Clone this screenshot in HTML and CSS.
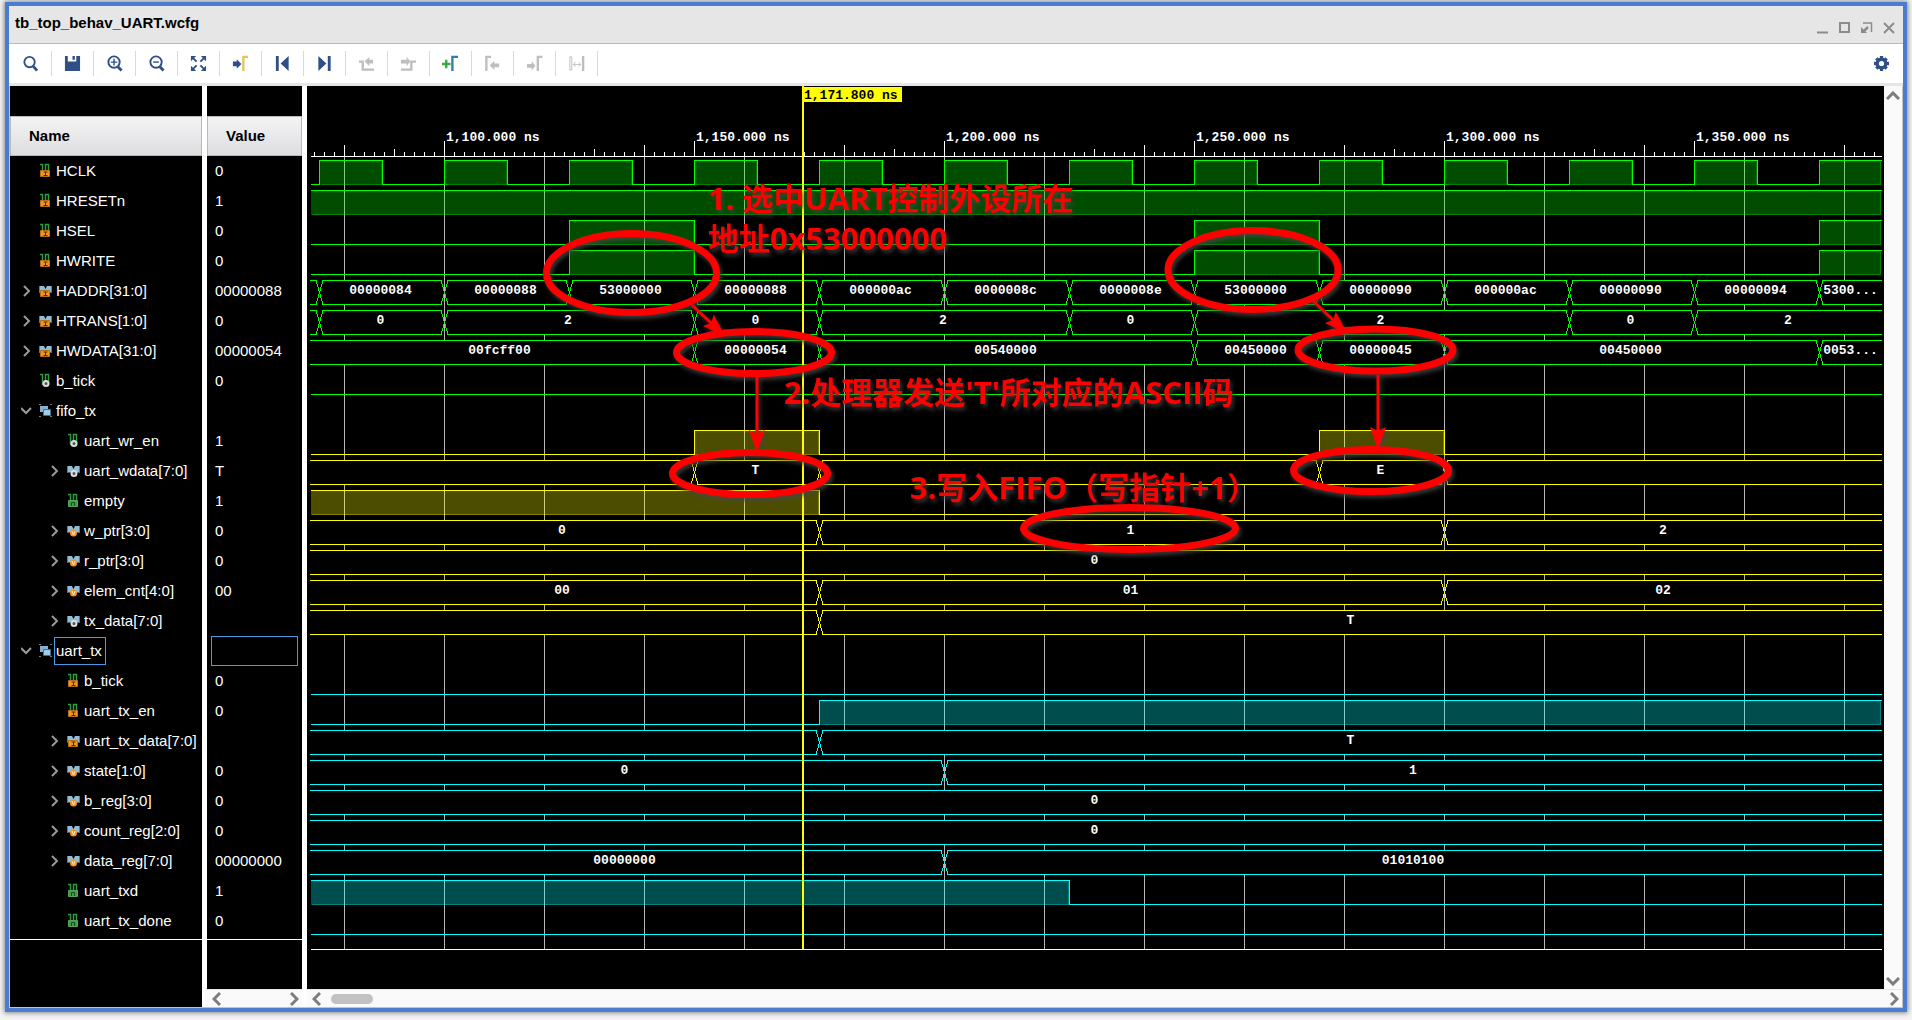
FILE: index.html
```html
<!DOCTYPE html>
<html lang="zh-CN">
<head>
    <meta charset="UTF-8">
    <meta name="viewport" content="width=device-width, initial-scale=1.0">
    <title>tb_top_behav_UART.wcfg</title>
    <link rel="stylesheet" href="styles.css">
</head>
<body>
    <div class="window">
        <header class="titlebar">
            <h1>tb_top_behav_UART.wcfg</h1>
            <div class="window-buttons">
                <button type="button" aria-label="Minimize"><svg width="12" height="12"><path d="M0 10.500h11" stroke-width="2"/></svg></button>
                <button type="button" aria-label="Maximize"><svg width="12" height="12"><path d="M1 1h9v9H1z" stroke-width="2"/></svg></button>
                <button type="button" aria-label="Float"><svg width="12" height="12"><path d="M2 1h8.500v9" stroke-width="1.500"/><path d="M2 10l5-5" stroke-width="2.500"/><path d="M0 5v6h6z" fill="#8c8c8c" stroke="none"/></svg></button>
                <button type="button" aria-label="Close"><svg width="12" height="12"><path d="M1 1l10 10M11 1L1 11" stroke-width="2"/></svg></button>
            </div>
        </header>

        <nav class="toolbar">
            <button type="button" aria-label="Search"><svg viewBox="0 0 18 18"><circle cx="8" cy="7.500" r="5.500"/><path d="M12 12l4 4.500" stroke-width="3"/></svg></button>
            <button type="button" aria-label="Save"><svg viewBox="0 0 18 18"><path class="solid" d="M1 1h3v6h9V1h4v16H1zM9 1h2.500v4H9z"/></svg></button>
            <button type="button" aria-label="Zoom In"><svg viewBox="0 0 18 18"><circle cx="8.500" cy="7.500" r="6"/><path d="M12.500 12.500l4 4" stroke-width="3"/><path d="M5 7.500h7M8.500 4v7" stroke-width="1.500"/></svg></button>
            <button type="button" aria-label="Zoom Out"><svg viewBox="0 0 18 18"><circle cx="8.500" cy="7.500" r="6"/><path d="M12.500 12.500l4 4" stroke-width="3"/><path d="M5.500 7.500h6" stroke-width="1.500"/></svg></button>
            <button type="button" aria-label="Zoom Fit"><svg viewBox="0 0 18 18"><path d="M3 3l4 4M15 3l-4 4M3 15l4-4M15 15l-4-4"/><path class="solid" d="M1 1h5.500L1 6.500zM17 1v5.500L11.500 1zM1 17v-5.500L6.500 17zM17 17h-5.500l5.500-5.500z"/></svg></button>
            <button type="button" aria-label="Go To Cursor"><svg viewBox="0 0 18 18"><path class="solid" d="M1 7h4V4.500L10 9.500l-5 5V12H1z"/><path d="M12 17V2h5" stroke="#e2c65a" stroke-width="2.500"/></svg></button>
            <button type="button" aria-label="Go To Start"><svg viewBox="0 0 18 18"><path class="solid" d="M2 1h3v16H2zM15.500 1v16L7 9z"/></svg></button>
            <button type="button" aria-label="Go To End"><svg viewBox="0 0 18 18"><path class="solid" d="M12.500 1h3v16h-3zM2.500 1v16L11 9z"/></svg></button>
            <button type="button" aria-label="Previous Transition" disabled><svg viewBox="0 0 18 18"><path d="M1 7h4v8.500h12" stroke-width="2.500"/><path class="solid" d="M7 6.500L12 2v3h4v4h-4v3z"/></svg></button>
            <button type="button" aria-label="Next Transition" disabled><svg viewBox="0 0 18 18"><path d="M1 15.500h11V7h5" stroke-width="2.500"/><path class="solid" d="M11 6.500L7 2v3H1v4h6v3z"/></svg></button>
            <button type="button" aria-label="Add Marker"><svg viewBox="0 0 18 18"><path d="M0 9.500h9M4.500 5v9" stroke="#3aa845" stroke-width="2.500"/><path d="M11 17V2h6" stroke="#2f7fb0" stroke-width="2.500"/></svg></button>
            <button type="button" aria-label="Previous Marker" disabled><svg viewBox="0 0 18 18"><path d="M2.500 17V2h5" stroke-width="2.500"/><path class="solid" d="M6 11l5-5v3h5v4h-5v3z"/></svg></button>
            <button type="button" aria-label="Next Marker" disabled><svg viewBox="0 0 18 18"><path d="M12.500 17V2h5" stroke-width="2.500"/><path class="solid" d="M10 11.500l-4-5v3H1v4h5v3z"/></svg></button>
            <button type="button" aria-label="Swap Cursors" disabled><svg viewBox="0 0 18 18"><path d="M2 2h2v14H2z" stroke-width="1"/><path d="M16 1v16" stroke-width="2.500"/><path d="M5.500 10h8M8 7.500L5.500 10 8 12.500M11 7.500l2.500 2.500-2.500 2.500" stroke-width="1"/></svg></button>
            <button type="button" class="settings" aria-label="Settings"><svg viewBox="0 0 18 18"><circle cx="9" cy="9" r="4.500" stroke-width="3.500"/><path d="M9 17v-3M17 9h-3M14.500 14.500l-2-2M3.500 14.500l2-2M9 1v3M1 9h3M3.500 3.500l2 2M14.500 3.500l-2 2" stroke-width="3.500"/></svg></button>
        </nav>

        <main class="viewer">
            <section class="pane names">
                <h2>Name</h2>
                <ul id="names"></ul>
            </section>
            <section class="pane values">
                <h2>Value</h2>
                <ul id="values"></ul>
                <div class="scrollbar">
                    <button type="button" aria-label="Scroll values left"><svg width="9" height="14"><path d="M8 1L2 7l6 6"/></svg></button>
                    <button type="button" aria-label="Scroll values right"><svg width="9" height="14"><path d="M1 1l6 6-6 6"/></svg></button>
                </div>
            </section>
            <section class="waves">
                <div class="canvas"><svg id="wave" role="img" aria-label="Waveform"></svg></div>
                <div class="scrollbar vertical">
                    <button type="button" aria-label="Scroll up"><svg width="14" height="9"><path d="M1 8l6-6 6 6"/></svg></button>
                    <button type="button" aria-label="Scroll down"><svg width="14" height="9"><path d="M1 1l6 6 6-6"/></svg></button>
                </div>
                <div class="scrollbar bottom">
                    <button type="button" aria-label="Scroll left"><svg width="9" height="14"><path d="M8 1L2 7l6 6"/></svg></button>
                    <span class="thumb"></span>
                    <button type="button" aria-label="Scroll right"><svg width="9" height="14"><path d="M1 1l6 6-6 6"/></svg></button>
                </div>
            </section>
        </main>
    </div>
    <script src="script.js"></script>
</body>
</html>
```

FILE: styles.css
```css
* {
    margin: 0;
    padding: 0;
    box-sizing: border-box;
}

body {
    height: 100vh;
    padding: 2px 5px 8px;
    background: #f4f4f4;
    font-family: "Liberation Sans", Arial, sans-serif;
    font-size: 15px;
    color: #000;
    overflow: hidden;
}

button {
    display: flex;
    align-items: center;
    justify-content: center;
    border: none;
    background: none;
    cursor: pointer;
}

svg {
    display: block;
    fill: none;
}

.window {
    display: flex;
    flex-direction: column;
    height: 100%;
    border: 4px solid #4a7dcf;
    background: #fff;
    box-shadow: 0 0 5px 1px #888;
}

/* title bar */
.titlebar {
    display: flex;
    align-items: center;
    justify-content: space-between;
    height: 38px;
    padding: 0 8px 0 6px;
    background: #e6e6e6;
    border-bottom: 1px solid #bababa;
}

.titlebar h1 {
    font-size: 15px;
    line-height: 34px;
    padding-bottom: 4px;
}

.window-buttons {
    display: flex;
    gap: 10px;
    padding-top: 6px;
}

.window-buttons svg {
    stroke: #8c8c8c;
}

/* toolbar */
.toolbar {
    display: flex;
    align-items: center;
    height: 42px;
    padding: 0 1px;
    background: #fff;
    border-bottom: 3px solid #e6e6e6;
}

.toolbar button {
    width: 42px;
    height: 25px;
    border-right: 1px solid #d9d9d9;
    color: #2f4f87;
}

.toolbar button:disabled {
    color: #bebebe;
}

.toolbar svg {
    width: 17px;
    height: 17px;
    stroke: currentColor;
    stroke-width: 2;
}

.toolbar .solid {
    fill: currentColor;
    stroke: none;
}

.toolbar .settings {
    margin-left: auto;
    border: none;
}

/* panes */
.viewer {
    display: flex;
    flex: 1;
    gap: 5px;
    min-height: 0;
    border: solid #c4c4c4;
    border-width: 0 1px 1px;
}

.pane {
    display: flex;
    flex-direction: column;
    flex: none;
    padding-top: 30px;
    background: #000;
    color: #fff;
}

.names {
    width: 192px;
}

.values {
    width: 95px;
}

.pane h2 {
    height: 40px;
    padding-left: 18px;
    border: 1px solid #b9b9bb;
    background: linear-gradient(#f4f4f5, #dddde0);
    color: #000;
    font-size: 15px;
    line-height: 38px;
}

.pane ul {
    list-style: none;
    padding-bottom: 3px;
    border-bottom: 1px solid #fff;
}

.pane li {
    display: flex;
    align-items: center;
    height: 30px;
    line-height: 26px;
    padding-bottom: 1px;
    white-space: nowrap;
}

.names li {
    padding-left: 11px;
}

.names li.child {
    padding-left: 39px;
}

.names .arrow {
    width: 18px;
    stroke: #9a9a9a;
    stroke-width: 2;
}

.names .icon {
    width: 15px;
}

.names .label {
    padding: 0 3px 0 1px;
    border: 1px solid transparent;
}

.values li {
    margin: 0 4px;
    padding-left: 3px;
    border: 1px solid transparent;
}

.names .selected .label,
.values .selected {
    border-color: #4a9be0;
}

.scrollbar {
    display: flex;
    align-items: center;
    justify-content: space-between;
    height: 18px;
    padding: 0 3px 0 5px;
    background: #fafafa;
    border-top: 1px solid #e6e6e6;
}

.scrollbar svg {
    stroke: #7d7d7d;
    stroke-width: 3;
}

.values .scrollbar {
    margin-top: auto;
}

.vertical {
    flex-direction: column;
    width: 18px;
    height: auto;
    padding: 5px 0 3px;
    border: none;
}

.bottom {
    grid-column: 1 / 3;
    gap: 10px;
}

.thumb {
    width: 42px;
    height: 10px;
    margin-right: auto;
    border-radius: 5px;
    background: #c1c1c1;
}

/* waveform */
.waves {
    display: grid;
    flex: 1;
    grid-template-columns: 1fr 18px;
    grid-template-rows: 1fr 18px;
    min-width: 0;
}

.canvas {
    min-width: 0;
    background: #000;
    overflow: hidden;
}

#wave {
    width: 100%;
    height: 100%;
    shape-rendering: crispEdges;
}

#wave text {
    fill: #fff;
    font: bold 13px "Liberation Mono", "Courier New", monospace;
}

.green {
    stroke: #0f0;
}

.yellow {
    stroke: #ff0;
}

.cyan {
    stroke: #0ff;
}

.fill-green {
    fill: #0f0;
    stroke: #0f0;
}

.fill-yellow {
    fill: #ff0;
    stroke: #ff0;
}

.fill-cyan {
    fill: #0ff;
    stroke: #0ff;
}

.high {
    fill-opacity: 0.3;
    stroke-opacity: 0.3;
}

.bus {
    fill: #000;
}

.grid {
    stroke: #b8b8b8;
}

.ruler {
    stroke: #fff;
}

.cursor {
    stroke: #ff0;
    stroke-width: 2;
}

.cursor-box {
    fill: #ff0;
}

#wave .cursor-label {
    fill: #000;
}

.notes {
    shape-rendering: auto;
    filter: drop-shadow(2px 3px 2px rgba(70, 70, 70, 0.8));
}

.notes ellipse {
    stroke: #f00;
    stroke-width: 7;
}

.notes line {
    stroke: #f00;
    stroke-width: 3;
}

.notes path {
    fill: #f00;
}

#wave .notes text {
    fill: #f00;
    font: bold 31px "Open Sans", "Noto Sans CJK SC", sans-serif;
}
```

FILE: script.js
```js
// edges and high ranges in ns, null = runs off the visible window
const signals = [
    { name: 'HCLK', value: '0', icon: 'bit-in', color: 'green', high: [[1075, 1087.5], [1100, 1112.5], [1125, 1137.5], [1150, 1162.5], [1175, 1187.5], [1200, 1212.5], [1225, 1237.5], [1250, 1262.5], [1275, 1287.5], [1300, 1312.5], [1325, 1337.5], [1350, 1362.5], [1375, null]] },
    { name: 'HRESETn', value: '1', icon: 'bit-in', color: 'green', high: [[null, null]] },
    { name: 'HSEL', value: '0', icon: 'bit-in', color: 'green', high: [[1125, 1150], [1250, 1275], [1375, null]] },
    { name: 'HWRITE', value: '0', icon: 'bit-in', color: 'green', high: [[1125, 1150], [1250, 1275], [1375, null]] },
    { name: 'HADDR[31:0]', value: '00000088', icon: 'bus-in', color: 'green', edges: [1075, 1100, 1125, 1150, 1175, 1200, 1225, 1250, 1275, 1300, 1325, 1350, 1375], data: ['', '00000084', '00000088', '53000000', '00000088', '000000ac', '0000008c', '0000008e', '53000000', '00000090', '000000ac', '00000090', '00000094', '5300...'] },
    { name: 'HTRANS[1:0]', value: '0', icon: 'bus-in', color: 'green', edges: [1075, 1100, 1150, 1175, 1225, 1250, 1325, 1350], data: ['', '0', '2', '0', '2', '0', '2', '0', '2'] },
    { name: 'HWDATA[31:0]', value: '00000054', icon: 'bus-in', color: 'green', edges: [1150, 1175, 1250, 1275, 1300, 1375], data: ['00fcff00', '00000054', '00540000', '00450000', '00000045', '00450000', '0053...'] },
    { name: 'b_tick', value: '0', icon: 'bit-sig', color: 'green', high: [] },
    { name: 'fifo_tx', value: '', icon: 'group' },
    { name: 'uart_wr_en', value: '1', icon: 'bit-sig', color: 'yellow', child: true, high: [[1150, 1175], [1275, 1300]] },
    { name: 'uart_wdata[7:0]', value: 'T', icon: 'bus-sig', color: 'yellow', child: true, edges: [1150, 1175, 1275, 1300], data: ['', 'T', '', 'E', ''] },
    { name: 'empty', value: '1', icon: 'bit-out', color: 'yellow', child: true, high: [[null, 1175]] },
    { name: 'w_ptr[3:0]', value: '0', icon: 'bus-var', color: 'yellow', child: true, edges: [1175, 1300], data: ['0', '1', '2'] },
    { name: 'r_ptr[3:0]', value: '0', icon: 'bus-var', color: 'yellow', child: true, edges: [], data: ['0'] },
    { name: 'elem_cnt[4:0]', value: '00', icon: 'bus-var', color: 'yellow', child: true, edges: [1175, 1300], data: ['00', '01', '02'] },
    { name: 'tx_data[7:0]', value: '', icon: 'bus-sig', color: 'yellow', child: true, edges: [1175], data: ['', 'T'] },
    { name: 'uart_tx', value: '', icon: 'group', selected: true },
    { name: 'b_tick', value: '0', icon: 'bit-in', color: 'cyan', child: true, high: [] },
    { name: 'uart_tx_en', value: '0', icon: 'bit-in', color: 'cyan', child: true, high: [[1175, null]] },
    { name: 'uart_tx_data[7:0]', value: '', icon: 'bus-in', color: 'cyan', child: true, edges: [1175], data: ['', 'T'] },
    { name: 'state[1:0]', value: '0', icon: 'bus-var', color: 'cyan', child: true, edges: [1200], data: ['0', '1'] },
    { name: 'b_reg[3:0]', value: '0', icon: 'bus-var', color: 'cyan', child: true, edges: [], data: ['0'] },
    { name: 'count_reg[2:0]', value: '0', icon: 'bus-var', color: 'cyan', child: true, edges: [], data: ['0'] },
    { name: 'data_reg[7:0]', value: '00000000', icon: 'bus-var', color: 'cyan', child: true, edges: [1200], data: ['00000000', '01010100'] },
    { name: 'uart_txd', value: '1', icon: 'bit-out', color: 'cyan', child: true, high: [[null, 1225]] },
    { name: 'uart_tx_done', value: '0', icon: 'bit-out', color: 'cyan', child: true, high: [] }
];

const bases = {
    bit: '<path d="M1 1.500h2.500V12M6.500 12V1.500h3V12" stroke="#2f9a41" stroke-width="1.500"/>',
    bus: '<path d="M0 3h5l1.500 3L8 3h5v6.500H0z" fill="#93bdd6"/><path d="M0.500 3v6.500M12.500 3v6.500" stroke="#61798a"/>'
};
const badges = {
    in: '<path d="M1.500 7.500h9v6h-9z" fill="#f7941d" stroke="#b5701c"/><path d="M4.500 9h4M4.500 12.500h4M6.500 9v4" stroke="#4a3010"/>',
    out: '<path d="M1.500 7.500h9v6h-9z" fill="#3f9a49" stroke="#55a35d"/><path d="M4.500 13V9.500h3V13" stroke="#14521c"/>',
    sig: '<circle cx="7" cy="10.500" r="2.500" fill="#555" stroke="#dcdcdc" stroke-width="2"/>',
    var: '<circle cx="6.500" cy="10" r="3.500" fill="#f7941d"/><path d="M5 8l1.500 4L8 8" stroke="#fde9cc"/>'
};
const groupIcon = '<path d="M0 1.500h2M11 1.500h2M0 13.500h2M11 13.500h2" stroke="#777"/><path d="M1 3h8v6H1z" fill="#7fb2d6"/><path d="M4.500 6.500h7v6h-7z" fill="#a5cbe6" stroke="#3d6f9b"/>';

function iconSvg(icon) {
    const [base, badge] = icon.split('-');
    return icon === 'group' ? groupIcon : bases[base] + badges[badge];
}

function arrowSvg(signal) {
    if (signal.icon === 'group') return '<path d="M0 5l5 5 5-5"/>';
    return signal.edges ? '<path d="M3 3l5 5-5 5"/>' : '';
}

document.getElementById('names').innerHTML = signals.map(s => `
    <li class="${s.child ? 'child' : ''} ${s.selected ? 'selected' : ''}">
        <svg class="arrow" height="15">${arrowSvg(s)}</svg>
        <svg class="icon" height="15">${iconSvg(s.icon)}</svg>
        <span class="label">${s.name}</span>
    </li>`).join('');

document.getElementById('values').innerHTML = signals.map(s =>
    `<li class="${s.selected ? 'selected' : ''}">${s.value}</li>`).join('');

const ROW_TOP = 74;
const ROW_HEIGHT = 30;
const AMPLITUDE = 24;
const RULER_Y = 70;
const BOTTOM_Y = 863;
const PX_PER_NS = 5;

function timeToX(t) {
    return 137 + Math.round((t - 1100) * PX_PER_NS);
}

function line(x1, y1, x2, y2, cls) {
    return `<line x1="${x1 + 0.5}" y1="${y1 + 0.5}" x2="${x2 + 0.5}" y2="${y2 + 0.5}" class="${cls}"/>`;
}

function drawRuler(left, right) {
    let out = line(left, RULER_Y, right, RULER_Y, 'ruler');
    for (let t = 1074; timeToX(t) < right; t += 2) {
        const x = timeToX(t);
        const phase = (t - 1000) % 100;
        let height = 5;
        if (phase % 50 === 0) height = 16;
        else if (phase === 40 || phase === 80) height = 12;
        else if (phase === 30 || phase === 90) height = 8;
        out += line(x, RULER_Y - height, x, RULER_Y, 'ruler');
        if (phase % 50 === 0) {
            out += `<text x="${x + 2}" y="55">1,${t - 1000}.000 ns</text>`;
        }
    }
    return out;
}

function drawGrid(right) {
    let out = '';
    for (let t = 1080; timeToX(t) < right; t += 20) {
        out += line(timeToX(t), RULER_Y, timeToX(t), BOTTOM_Y, 'grid');
    }
    return out;
}

function drawBit(s, y, left, right) {
    const low = y + AMPLITUDE;
    let path = '';
    let boxes = '';
    let x = left;
    s.high.forEach(([from, to]) => {
        const a = from === null ? left : timeToX(from);
        const b = to === null ? right : timeToX(to);
        if (from === null) path += `M${a + 0.5} ${y + 0.5}`;
        else path += `M${x + 0.5} ${low + 0.5}H${a + 0.5}V${y + 0.5}`;
        path += `H${b + 0.5}`;
        if (to !== null) path += `V${low + 0.5}`;
        boxes += `<rect x="${a + 1.5}" y="${y + 1.5}" width="${b - a - 2}" height="${AMPLITUDE - 1}" class="high fill-${s.color}"/>`;
        x = b;
    });
    if (x < right) path += `M${x + 0.5} ${low + 0.5}H${right + 0.5}`;
    return boxes + `<path d="${path}" class="${s.color}"/>`;
}

// each value is a black cell between two crossings
function drawBus(s, y, left, right, width) {
    const low = y + AMPLITUDE;
    const mid = y + AMPLITUDE / 2;
    const xs = s.edges.map(timeToX);
    let out = '';
    s.data.forEach((text, i) => {
        const first = i === 0;
        const last = i === xs.length;
        const a = first ? left : xs[i - 1];
        const b = last ? right : xs[i];
        const inA = first ? a : a + 4;
        const inB = last ? b + 1 : b - 3;
        const tipA = first ? '' : `${a + 0.5},${mid + 0.5}`;
        const tipB = last ? '' : `${b + 0.5},${mid + 0.5}`;
        out += `<polygon class="bus" points="${tipA} ${inA},${y} ${inB},${y} ${tipB} ${inB},${low} ${inA},${low}"/>`;
        out += `<polyline class="${s.color}" points="${tipA} ${inA},${y + 0.5} ${inB},${y + 0.5} ${tipB}"/>`;
        out += `<polyline class="${s.color}" points="${tipA} ${inA},${low + 0.5} ${inB},${low + 0.5} ${tipB}"/>`;

        const center = ((first ? 0 : a) + (last ? width : b)) / 2 - 1;
        if (text) out += `<text x="${center}" y="${y + 14}" text-anchor="middle">${text}</text>`;
    });
    return out;
}

function arrow(x1, y1, x2, y2) {
    const angle = Math.atan2(y2 - y1, x2 - x1) * 180 / Math.PI;
    return `<line x1="${x1}" y1="${y1}" x2="${x2 - (x2 - x1) * 0.2}" y2="${y2 - (y2 - y1) * 0.2}"/>
        <path d="M0 0L-23 -8L-19 0L-23 8z" transform="translate(${x2} ${y2}) rotate(${angle})"/>`;
}

function drawNotes() {
    const rings = [
        [324.5, 187, 85, 39.5], [447, 266.5, 77.5, 21], [443, 387.5, 77.5, 21], [822.5, 442.5, 106, 21],
        [946, 184, 85, 39.5], [1068.5, 264, 77.5, 21], [1064, 384.5, 77.5, 21]
    ];
    return '<g class="notes">'
        + rings.map(([x, y, rx, ry]) => `<ellipse cx="${x}" cy="${y}" rx="${rx}" ry="${ry}"/>`).join('')
        + arrow(385, 219, 418, 250) + arrow(450, 290, 450, 367)
        + arrow(1006, 215, 1040, 247) + arrow(1071, 289, 1071, 364)
        + `<text x="401" y="124">1. 选中UART控制外设所在</text>
           <text x="401" y="164">地址0x53000000</text>
           <text x="477" y="318">2.处理器发送'T'所对应的ASCII码</text>
           <text x="603" y="413">3.写入FIFO（写指针+1）</text></g>`;
}

function drawWave() {
    const svg = document.getElementById('wave');
    const width = svg.parentElement.clientWidth;
    const left = 3;
    const right = width - 3;
    let out = drawGrid(right) + drawRuler(left, right);

    signals.forEach((s, i) => {
        const y = ROW_TOP + i * ROW_HEIGHT;
        if (s.high) out += drawBit(s, y, left, right);
        if (s.edges) out += drawBus(s, y, left, right, width);
    });

    out += line(left, BOTTOM_Y, right, BOTTOM_Y, 'ruler');

    const cursorX = timeToX(1171.8);
    out += `<line x1="${cursorX}" y1="0" x2="${cursorX}" y2="${BOTTOM_Y}" class="cursor"/>
        <rect x="${cursorX}" y="1" width="99" height="15" class="cursor-box"/>
        <text x="${cursorX + 1}" y="13" class="cursor-label">1,171.800 ns</text>`;

    svg.innerHTML = out + drawNotes();
}

drawWave();
window.addEventListener('resize', drawWave);
```
